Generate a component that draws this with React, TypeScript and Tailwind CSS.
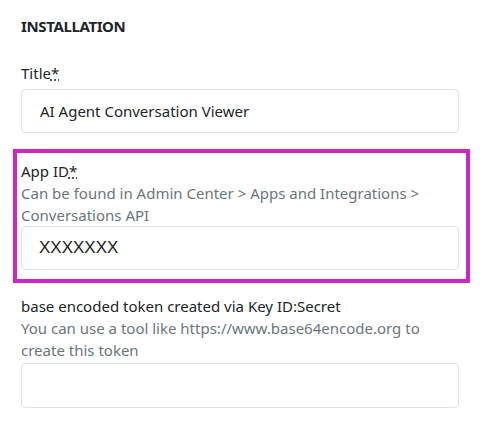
export default function App() {
  return (
    <div className="w-[487px] h-[424px] bg-white overflow-hidden font-['Noto_Sans',sans-serif] text-[#212529]">
      <div className="ml-[13px] w-[457px] pt-[16px]">
        <h2 className="px-2 text-[15px] font-bold leading-[20px] tracking-tight">INSTALLATION</h2>

        {/* Title */}
        <div className="px-2 pt-[26px]">
          <label className="block text-[15px] leading-[22px]">
            Title<abbr className="underline decoration-dotted">*</abbr>
          </label>
          <div className="mt-[5px] w-[438px] h-[44px] rounded border border-[#dee2e6] flex items-center pl-[18px] text-[15px]">
            AI Agent Conversation Viewer
          </div>
        </div>

        {/* App ID (highlighted) */}
        <div className="mt-[16px] border-4 border-[#cc27c5] px-1 pt-[7px] pb-[9px]">
          <label className="block text-[15px] leading-[22px]">
            App ID<abbr className="underline decoration-dotted">*</abbr>
          </label>
          <p className="text-[15px] leading-[22px] text-[#6c757d]">
            Can be found in Admin Center &gt; Apps and Integrations &gt; Conversations API
          </p>
          <div className="w-[438px] h-[44px] rounded border border-[#dee2e6] flex items-center pl-[17px] font-['Liberation_Sans',sans-serif] text-[17px] text-[#222]">
            XXXXXXX
          </div>
        </div>

        {/* Token */}
        <div className="px-2 pt-[12px]">
          <label className="block text-[15px] leading-[22px]">base encoded token created via Key ID:Secret</label>
          <p className="text-[15px] leading-[22px] text-[#6c757d]">
            You can use a tool like https://www.base64encode.org to create this token
          </p>
          <div className="mt-[2px] w-[438px] h-[45px] rounded border border-[#dee2e6]" />
        </div>
      </div>
    </div>
  );
}
